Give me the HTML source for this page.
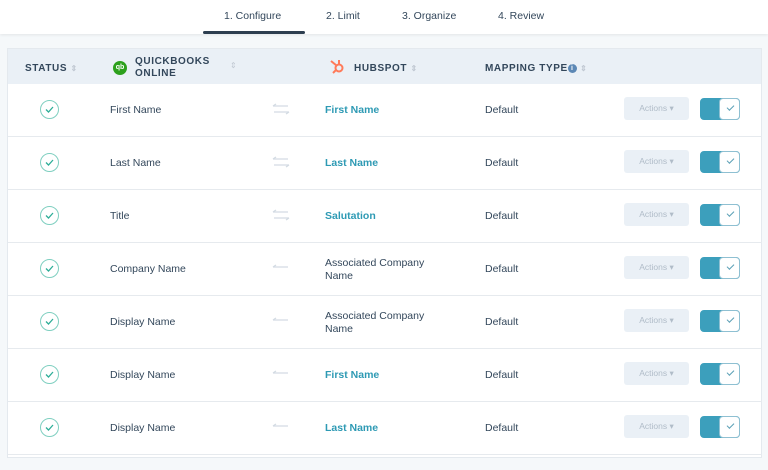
<!DOCTYPE html>
<html><head><style>
*{margin:0;padding:0;box-sizing:border-box}
body{width:768px;height:470px;overflow:hidden;background:#f5f8fa;font-family:"Liberation Sans",sans-serif;color:#33475b;position:relative}
.top{position:absolute;left:0;top:0;width:768px;height:34px;background:#fff;box-shadow:0 1px 3px rgba(0,0,0,.08)}
.tab{position:absolute;top:10px;font-size:10.5px;color:#33475b}
.ul{position:absolute;left:203px;top:31px;width:102px;height:3px;background:#2d3e50;border-radius:2px}
.tbl{position:absolute;left:7px;top:48px;width:755px;height:410px;background:#fff;border:1px solid #e4e9ee}
.hd{position:absolute;left:0;top:0;width:100%;height:35px;background:#eaf0f6}
.h{position:absolute;font-size:10px;font-weight:bold;letter-spacing:.6px;color:#33475b}
.sort{color:#c0c8d2;font-size:8px}
.row{position:absolute;left:0;width:100%;height:53px;border-bottom:1px solid #e6eaee;font-size:10.5px}
.row>*{position:absolute}
.chk{left:32px;top:16px;width:19px;height:19px;border:1px solid #7fcfc0;border-radius:50%}
.q{left:102px;top:20px}
.arr{left:264px;top:18px}
.hs{left:317px;top:20px}
.hs.b{color:#2e9ab4;font-weight:bold}
.hs.t{top:14px;line-height:13px}
.def{left:477px;top:20px}
.act{left:616px;top:13px;width:65px;height:23px;background:#eaf0f6;border-radius:3px;color:#b0bcc8;font-size:8.5px;text-align:center;line-height:23px}
.tg{left:692px;top:14px;width:40px;height:22px;border-radius:4px;background:#3c9fbc;border:1px solid #3c9fbc}
.tg i{position:absolute;right:-1px;top:-1px;width:21px;height:22px;background:#fff;border-radius:4px;border:1px solid #8fc0d2}
.tg i:after{content:"";position:absolute;left:7px;top:6px;width:6px;height:3px;border-left:1.2px solid #5a9fb5;border-bottom:1.2px solid #5a9fb5;transform:rotate(-45deg)}
</style></head><body>
<div class="top">
<span class="tab" style="left:224px">1. Configure</span>
<span class="tab" style="left:326px">2. Limit</span>
<span class="tab" style="left:402px">3. Organize</span>
<span class="tab" style="left:498px">4. Review</span>
<div class="ul"></div>
</div>
<div class="tbl">
<div class="hd">
<span class="h" style="left:17px;top:14px">STATUS <span class="sort">⇕</span></span>
<span style="position:absolute;left:105px;top:12px;width:14px;height:14px;border-radius:50%;background:#2ca01c;color:#fff;font-size:7px;font-weight:bold;text-align:center;line-height:14px">qb</span>
<span class="h" style="left:127px;top:7px;line-height:12px">QUICKBOOKS<br>ONLINE</span>
<span class="sort" style="position:absolute;left:222px;top:12px">⇕</span>
<svg style="position:absolute;left:320px;top:8px" width="18" height="18" viewBox="0 0 18 18" fill="none" stroke="#ff7a59" stroke-width="2"><circle cx="11" cy="11" r="3.5"/><path d="M11 7.5V3M8.5 8.5L3 4M8 13l-3 3"/></svg>
<span class="h" style="left:346px;top:14px">HUBSPOT <span class="sort">⇕</span></span>
<span class="h" style="left:477px;top:14px">MAPPING TYPE<span style="display:inline-block;width:9px;height:9px;border-radius:50%;background:#5c88b5;color:#fff;font-size:7px;text-align:center;line-height:9px;vertical-align:middle">i</span> <span class="sort">⇕</span></span>
</div>
</div>
<div style="position:absolute;left:8px;top:84px;width:754px">
<div class="row" style="top:0"><div class="chk"><svg width="17" height="17" viewBox="0 0 17 17"><path d="M5 8.5l2.5 2.5 4.5-5" stroke="#2fae98" stroke-width="1.3" fill="none"/></svg></div><span class="q">First Name</span><svg class="arr" width="18" height="14"><path d="M1 4h15M1 4l3-2M2 10h15M17 10l-3 2" stroke="#d3dbe3" stroke-width="1.3" fill="none"/></svg><span class="hs b">First Name</span><span class="def">Default</span><span class="act">Actions ▾</span><span class="tg"><i></i></span></div>
<div class="row" style="top:53px"><div class="chk"><svg width="17" height="17" viewBox="0 0 17 17"><path d="M5 8.5l2.5 2.5 4.5-5" stroke="#2fae98" stroke-width="1.3" fill="none"/></svg></div><span class="q">Last Name</span><svg class="arr" width="18" height="14"><path d="M1 4h15M1 4l3-2M2 10h15M17 10l-3 2" stroke="#d3dbe3" stroke-width="1.3" fill="none"/></svg><span class="hs b">Last Name</span><span class="def">Default</span><span class="act">Actions ▾</span><span class="tg"><i></i></span></div>
<div class="row" style="top:106px"><div class="chk"><svg width="17" height="17" viewBox="0 0 17 17"><path d="M5 8.5l2.5 2.5 4.5-5" stroke="#2fae98" stroke-width="1.3" fill="none"/></svg></div><span class="q">Title</span><svg class="arr" width="18" height="14"><path d="M1 4h15M1 4l3-2M2 10h15M17 10l-3 2" stroke="#d3dbe3" stroke-width="1.3" fill="none"/></svg><span class="hs b">Salutation</span><span class="def">Default</span><span class="act">Actions ▾</span><span class="tg"><i></i></span></div>
<div class="row" style="top:159px"><div class="chk"><svg width="17" height="17" viewBox="0 0 17 17"><path d="M5 8.5l2.5 2.5 4.5-5" stroke="#2fae98" stroke-width="1.3" fill="none"/></svg></div><span class="q">Company Name</span><svg class="arr" width="18" height="14" style="top:20px"><path d="M1 4h15M1 4l3-2" stroke="#d3dbe3" stroke-width="1.3" fill="none"/></svg><span class="hs t">Associated Company<br>Name</span><span class="def">Default</span><span class="act">Actions ▾</span><span class="tg"><i></i></span></div>
<div class="row" style="top:212px"><div class="chk"><svg width="17" height="17" viewBox="0 0 17 17"><path d="M5 8.5l2.5 2.5 4.5-5" stroke="#2fae98" stroke-width="1.3" fill="none"/></svg></div><span class="q">Display Name</span><svg class="arr" width="18" height="14" style="top:20px"><path d="M1 4h15M1 4l3-2" stroke="#d3dbe3" stroke-width="1.3" fill="none"/></svg><span class="hs t">Associated Company<br>Name</span><span class="def">Default</span><span class="act">Actions ▾</span><span class="tg"><i></i></span></div>
<div class="row" style="top:265px"><div class="chk"><svg width="17" height="17" viewBox="0 0 17 17"><path d="M5 8.5l2.5 2.5 4.5-5" stroke="#2fae98" stroke-width="1.3" fill="none"/></svg></div><span class="q">Display Name</span><svg class="arr" width="18" height="14" style="top:20px"><path d="M1 4h15M1 4l3-2" stroke="#d3dbe3" stroke-width="1.3" fill="none"/></svg><span class="hs b">First Name</span><span class="def">Default</span><span class="act">Actions ▾</span><span class="tg"><i></i></span></div>
<div class="row" style="top:318px"><div class="chk"><svg width="17" height="17" viewBox="0 0 17 17"><path d="M5 8.5l2.5 2.5 4.5-5" stroke="#2fae98" stroke-width="1.3" fill="none"/></svg></div><span class="q">Display Name</span><svg class="arr" width="18" height="14" style="top:20px"><path d="M1 4h15M1 4l3-2" stroke="#d3dbe3" stroke-width="1.3" fill="none"/></svg><span class="hs b">Last Name</span><span class="def">Default</span><span class="act">Actions ▾</span><span class="tg"><i></i></span></div>
</div>
</body></html>
